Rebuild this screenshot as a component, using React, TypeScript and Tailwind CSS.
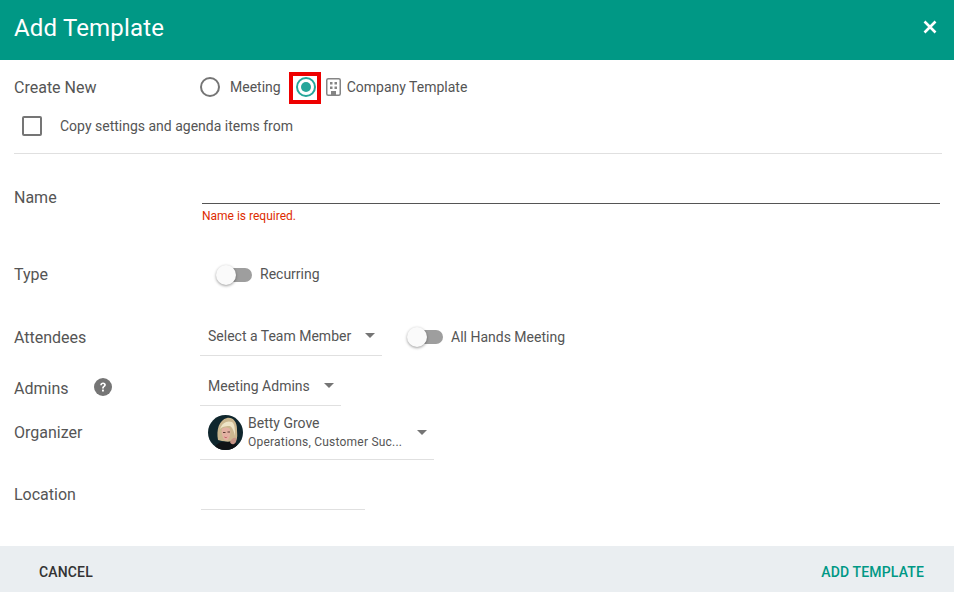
import React from 'react';

const Caret = () => (
  <svg width="10" height="5" viewBox="0 0 10 5" className="shrink-0">
    <path d="M0 0h10L5 5z" fill="#757575" />
  </svg>
);

const Toggle = () => (
  <span className="relative flex h-5 w-9 shrink-0 items-center">
    <span className="ml-[2px] h-[14px] w-[34px] rounded-full bg-[#9e9e9e]" />
    <span className="absolute left-0 top-0 h-5 w-5 rounded-full bg-[#fafafa] shadow-[0_1px_3px_rgba(0,0,0,0.4)]" />
  </span>
);

const Avatar = () => (
  <svg width="35" height="35" viewBox="0 0 35 35" className="shrink-0">
    <defs>
      <clipPath id="avatar-clip">
        <circle cx="17.5" cy="17.5" r="17.5" />
      </clipPath>
    </defs>
    <g clipPath="url(#avatar-clip)">
      <rect width="35" height="35" fill="#0f262d" />
      <path d="M10 25C8 15 11 5 19 3c6-1 10 4 10 11 0 5 1 8-1 12l-6 1-8-1z" fill="#cbb78f" />
      <path d="M14 14c2-2 6-2 8 0 1 4 0 8-2 11-2 1-4 0-5-2-1-3-2-6-1-9z" fill="#e3b1a2" />
      <path d="M12 14c2-6 7-9 12-7 3 2 3 8 3 14-1-4-2-8-5-10-3 0-7 0-10 3z" fill="#eee4c6" />
      <path d="M15 17.500h2.500M19.500 17h2.500" stroke="#5a3b34" strokeWidth="1" />
      <path d="M16 21.500c1.500 .8 2.500 .8 3.500 0-.8 1.800-2.700 1.800-3.500 0z" fill="#bf4358" />
      <path d="M6 35c1-5 6-9 11-8 3 .5 5-1 8-1 3 1 5 5 5 9z" fill="#101316" />
      <path d="M22 27c1-3 4-5 6-4 1 2 0 5-2 6-2 .5-3 0-4-2z" fill="#c89586" />
    </g>
  </svg>
);

const Label = ({ children }: { children: React.ReactNode }) => (
  <span className="w-[186px] shrink-0 text-base text-[#555]">{children}</span>
);

export default function App() {
  return (
    <div className="flex h-[592px] w-[954px] flex-col bg-white font-['Roboto',sans-serif] text-[#555]">
      <header className="flex h-[60px] shrink-0 items-center justify-between bg-[#009885] pb-[4px] pl-[14px] pr-[17px] text-white">
        <h1 className="text-2xl font-normal leading-none tracking-[0.17px]">Add Template</h1>
        <svg width="14" height="14" viewBox="0 0 14 14" fill="none" stroke="white" strokeWidth="2.6" className="mb-[2px]">
          <path d="M1.5 1.5l11 11M12.5 1.5l-11 11" />
        </svg>
      </header>

      <main className="flex-1 px-[14px]">
        <div className="mt-[10px] flex h-[34px] items-center">
          <Label>
            <span className="block pt-[2px]">Create New</span>
          </Label>
          <span className="h-5 w-5 rounded-full border-2 border-[#757575]" />
          <span className="ml-[10px] text-sm">Meeting</span>
          <span className="ml-[8px] mt-[2px] flex h-8 w-8 items-center justify-center border-[4px] border-[#ee0000] pb-[2px] pl-[2px]">
            <span className="flex h-5 w-5 shrink-0 items-center justify-center rounded-full border-2 border-[#26a69a]">
              <span className="h-[10px] w-[10px] rounded-full bg-[#26a69a]" />
            </span>
          </span>
          <svg width="15" height="18" viewBox="0 0 15 18" fill="none" className="ml-[5px]">
            <rect x="0.75" y="0.75" width="13.5" height="16.5" rx="1.5" stroke="#858585" strokeWidth="1.5" />
            <path d="M4 4h2.500v2.500H4zM8.500 4H11v2.500H8.500zM4 8.500h2.500V11H4zM8.500 8.500H11V11H8.500zM5 13h5v4H5z" fill="#858585" />
          </svg>
          <span className="ml-[6px] text-sm">Company Template</span>
        </div>

        <div className="mt-[5px] flex h-[34px] items-center pl-2">
          <span className="h-5 w-5 rounded-[2px] border-2 border-[#757575]" />
          <span className="ml-[18px] text-sm">Copy settings and agenda items from</span>
        </div>

        <div className="mt-[10px] h-px w-[928px] bg-[#e0e0e0]" />

        <div className="mt-[26px] flex">
          <Label>
            <span className="flex h-[36px] items-center">Name</span>
          </Label>
          <div className="w-[740px] pl-[2px]">
            <div className="h-[24px] border-b border-[#555]" />
            <p className="mt-[5px] text-xs leading-[15px] text-[#dd2c00]">Name is required.</p>
          </div>
        </div>

        <div className="mt-[39px] flex h-[24px] items-center">
          <Label>Type</Label>
          <span className="ml-[16px]">
            <Toggle />
          </span>
          <span className="mb-[2px] ml-[8px] text-sm">Recurring</span>
        </div>

        <div className="mt-[27px] flex h-[42px] items-start">
          <Label>
            <span className="flex h-[48px] items-center">Attendees</span>
          </Label>
          <div className="flex h-[42px] w-[182px] items-center border-b border-[#e0e0e0] pt-[2px] pl-2">
            <span className="text-sm">Select a Team Member</span>
            <span className="ml-[14px]">
              <Caret />
            </span>
          </div>
          <div className="flex h-[46px] items-center">
            <span className="ml-[25px]">
              <Toggle />
            </span>
            <span className="ml-[8px] text-sm">All Hands Meeting</span>
          </div>
        </div>

        <div className="flex h-[50px] items-end">
          <div className="flex h-[44px] w-[186px] shrink-0 items-center pt-[10px] text-base">
            <span className="w-[80px]">Admins</span>
            <svg width="18" height="18" viewBox="0 0 18 18" className="-mt-[4px]">
              <circle cx="9" cy="9" r="9" fill="#757575" />
              <path d="M6.200 7.200c0-1.800 1.300-2.800 2.900-2.800 1.600 0 2.800 1 2.800 2.400 0 1.900-2.100 1.900-2.100 3.600H8c0-2.400 2-2.400 2-3.500 0-.6-.4-1-1-1-.7 0-1 .5-1.100 1.300z" fill="white" />
              <rect x="8" y="11.600" width="1.900" height="1.900" fill="white" />
            </svg>
          </div>
          <div className="flex h-[44px] w-[141px] items-center border-b border-[#e0e0e0] pt-[4px] pl-2">
            <span className="text-sm">Meeting Admins</span>
            <span className="ml-[14px]">
              <Caret />
            </span>
          </div>
        </div>

        <div className="flex h-[54px] items-start">
          <Label>
            <span className="flex h-[53px] items-center">Organizer</span>
          </Label>
          <div className="flex h-[54px] w-[234px] items-center border-b border-[#e0e0e0] pl-2">
            <Avatar />
            <div className="ml-[5px] w-[164px] min-w-0">
              <p className="text-sm leading-[18px]">Betty Grove</p>
              <p className="mt-px whitespace-nowrap text-xs leading-[19px] tracking-[0.22px]">Operations, Customer Suc...</p>
            </div>
            <span className="ml-[5px]">
              <Caret />
            </span>
          </div>
        </div>

        <div className="flex h-[50px] items-start">
          <Label>
            <span className="flex h-[70px] items-center">Location</span>
          </Label>
          <div className="ml-px h-[50px] w-[164px] border-b border-[#e0e0e0]" />
        </div>
      </main>

      <footer className="flex h-[46px] shrink-0 items-center justify-between bg-[#eaeef1] pt-[6px] pl-[39px] pr-[30px] text-sm font-medium tracking-[0.15px]">
        <span className="text-[#333]">CANCEL</span>
        <span className="text-[#009885]">ADD TEMPLATE</span>
      </footer>
    </div>
  );
}
